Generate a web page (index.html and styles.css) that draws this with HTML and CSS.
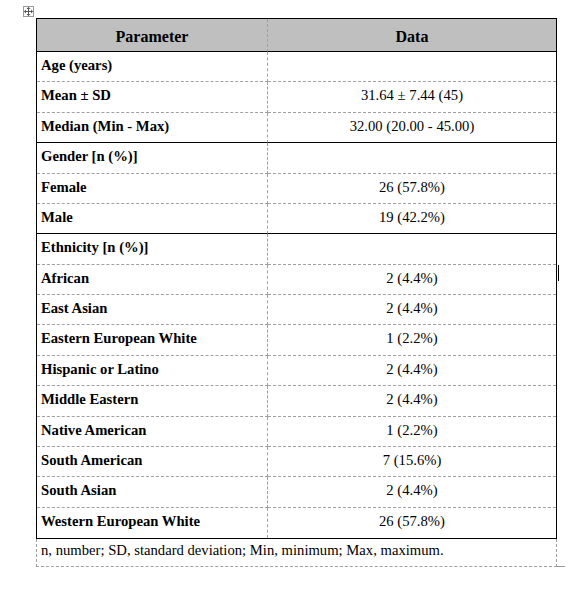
FILE: index.html
```html
<!DOCTYPE html>
<html>
<head>
<meta charset="utf-8">
<link rel="stylesheet" href="styles.css">
</head>
<body>
<div class="page">
  <div class="move-handle">
    <svg width="9" height="9" viewBox="0 0 9 9">
      <path d="M4.5 0.5 L4.5 8.5 M0.5 4.5 L8.5 4.5" stroke="#555" stroke-width="1" fill="none"/>
      <path d="M4.5 0 L2.5 2 L6.5 2 Z M4.5 9 L2.5 7 L6.5 7 Z M0 4.5 L2 2.5 L2 6.5 Z M9 4.5 L7 2.5 L7 6.5 Z" fill="#555"/>
    </svg>
  </div>
  <table class="tbl">
    <thead>
      <tr><th class="h1">Parameter</th><th class="h2">Data</th></tr>
    </thead>
    <tbody>
      <tr class="grp"><td class="c1">Age (years)</td><td class="c2"></td></tr>
      <tr><td class="c1">Mean ± SD</td><td class="c2">31.64 ± 7.44 (45)</td></tr>
      <tr class="end"><td class="c1">Median (Min - Max)</td><td class="c2">32.00 (20.00 - 45.00)</td></tr>
      <tr class="grp"><td class="c1">Gender [n (%)]</td><td class="c2"></td></tr>
      <tr><td class="c1">Female</td><td class="c2">26 (57.8%)</td></tr>
      <tr class="end"><td class="c1">Male</td><td class="c2">19 (42.2%)</td></tr>
      <tr class="grp"><td class="c1">Ethnicity [n (%)]</td><td class="c2"></td></tr>
      <tr><td class="c1">African</td><td class="c2">2 (4.4%)</td></tr>
      <tr><td class="c1">East Asian</td><td class="c2">2 (4.4%)</td></tr>
      <tr><td class="c1">Eastern European White</td><td class="c2">1 (2.2%)</td></tr>
      <tr><td class="c1">Hispanic or Latino</td><td class="c2">2 (4.4%)</td></tr>
      <tr><td class="c1">Middle Eastern</td><td class="c2">2 (4.4%)</td></tr>
      <tr><td class="c1">Native American</td><td class="c2">1 (2.2%)</td></tr>
      <tr><td class="c1">South American</td><td class="c2">7 (15.6%)</td></tr>
      <tr><td class="c1">South Asian</td><td class="c2">2 (4.4%)</td></tr>
      <tr class="last"><td class="c1">Western European White</td><td class="c2">26 (57.8%)</td></tr>
    </tbody>
  </table>
  <div class="footnote">n, number; SD, standard deviation; Min, minimum; Max, maximum.</div>
  <div class="resize-handle"></div>
  <div class="caret-mark"></div>
</div>
</body>
</html>
```

FILE: styles.css
```css
html, body {
  margin: 0;
  padding: 0;
  background: #ffffff;
}

.page {
  position: relative;
  padding: 18px 0 0 36px;
  font-family: "Liberation Serif", "Times New Roman", serif;
  font-size: 14.67px;
  color: #000;
}

.move-handle {
  position: absolute;
  left: 23px;
  top: 6px;
  width: 9px;
  height: 9px;
  border: 1px solid #9a9a9a;
  background: #fff;
  display: flex;
}

.move-handle svg {
  display: block;
}

.tbl {
  width: 521px;
  border-collapse: separate;
  border-spacing: 0;
  border: 1px solid #000;
  table-layout: fixed;
}

.tbl td {
  padding: 5px 4px 7.375px 4px;
  line-height: 17px;
  border-bottom: 1px dashed #a0a0a0;
  vertical-align: top;
  white-space: nowrap;
}

.tbl th {
  background: #bfbfbf;
  font-weight: bold;
  font-size: 16px;
  line-height: 18px;
  text-align: center;
  padding: 9px 4px 5px 4px;
  border-bottom: 1px solid #000;
  white-space: nowrap;
}

.tbl .h1,
.tbl .c1 {
  width: 222px;
  border-right: 1px dashed #a0a0a0;
}

.tbl .c1 {
  text-align: left;
  font-weight: bold;
}

.tbl .c2 {
  text-align: center;
  font-weight: normal;
}

.tbl tr.end td {
  border-bottom: 1px solid #000;
}

.tbl tr.last td {
  border-bottom: 0;
  padding-bottom: 8.375px;
}

.footnote {
  width: 511px;
  padding: 3px 4px 7px 4px;
  line-height: 17px;
  border-left: 1px dashed #a0a0a0;
  border-right: 1px dashed #a0a0a0;
  border-bottom: 1px dashed #a0a0a0;
}

.resize-handle {
  position: absolute;
  left: 557px;
  top: 566px;
  width: 6px;
  height: 6px;
  border: 1px solid #9a9a9a;
  background: #fff;
}

.caret-mark {
  position: absolute;
  left: 558px;
  top: 265px;
  width: 1px;
  height: 16px;
  background: #000;
}
```
